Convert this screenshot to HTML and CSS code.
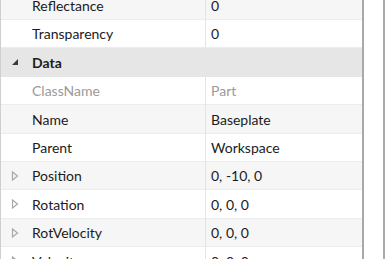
FILE: index.html
```html
<!DOCTYPE html>
<html>
<head>
<meta charset="utf-8">
<link rel="stylesheet" href="styles.css">
</head>
<body>
<div class="panel">
  <div class="viewport">
    <div class="list">
      <div class="row alt h29"><div class="name">Reflectance</div><div class="value">0</div></div>
      <div class="row h28"><div class="name">Transparency</div><div class="value">0</div></div>
      <div class="row header h29"><div class="name"><svg class="arrow" width="8" height="8" viewBox="0 0 8 8"><polygon points="7,1 7,7 1,7" fill="#3a3a3a"/></svg><b>Data</b></div><div class="value"></div></div>
      <div class="row h28 muted"><div class="name">ClassName</div><div class="value">Part</div></div>
      <div class="row alt h29"><div class="name">Name</div><div class="value">Baseplate</div></div>
      <div class="row h28"><div class="name">Parent</div><div class="value">Workspace</div></div>
      <div class="row alt h28"><div class="name"><svg class="arrow" width="8" height="10" viewBox="0 0 8 10"><polygon points="1.5,1 6.5,5 1.5,9" fill="none" stroke="#a8a8a8" stroke-width="1.2"/></svg>Position</div><div class="value">0, -10, 0</div></div>
      <div class="row h29"><div class="name"><svg class="arrow" width="8" height="10" viewBox="0 0 8 10"><polygon points="1.5,1 6.5,5 1.5,9" fill="none" stroke="#a8a8a8" stroke-width="1.2"/></svg>Rotation</div><div class="value">0, 0, 0</div></div>
      <div class="row alt h28"><div class="name"><svg class="arrow" width="8" height="10" viewBox="0 0 8 10"><polygon points="1.5,1 6.5,5 1.5,9" fill="none" stroke="#a8a8a8" stroke-width="1.2"/></svg>RotVelocity</div><div class="value">0, 0, 0</div></div>
      <div class="row h29"><div class="name"><svg class="arrow" width="8" height="10" viewBox="0 0 8 10"><polygon points="1.5,1 6.5,5 1.5,9" fill="none" stroke="#a8a8a8" stroke-width="1.2"/></svg>Velocity</div><div class="value">0, 0, 0</div></div>
    </div>
  </div>
  <div class="scrollbar"></div>
</div>
</body>
</html>
```
FILE: styles.css
```css
html, body {
  margin: 0;
  padding: 0;
  background: #ffffff;
}
body {
  font-family: Lato, "Noto Sans", sans-serif;
  font-size: 14px;
  color: #1b1b1b;
  width: 386px;
  height: 259px;
  overflow: hidden;
}
.panel {
  display: flex;
  height: 259px;
}
.viewport {
  width: 361px;
  height: 259px;
  overflow: hidden;
  border-left: 1px solid #cfcfcf;
}
.list {
  margin-top: -9px;
  display: flex;
  flex-direction: column;
}
.row {
  display: flex;
  align-items: stretch;
  border-bottom: 1px solid #ececec;
  background: #ffffff;
  box-sizing: border-box;
}
.h28 { height: 28px; }
.h29 { height: 29px; }
.row.alt { background: #f6f6f6; }
.row.header { background: #e6e6e6; border-bottom-color: #e6e6e6; }
.name {
  width: 205px;
  box-sizing: border-box;
  padding-left: 31px;
  display: flex;
  align-items: center;
  position: relative;
  border-right: 1px solid #e4e4e4;
}
.header .name { border-right-color: #e6e6e6; }
.value {
  flex: 1;
  padding-left: 5px;
  display: flex;
  align-items: center;
}
.muted { color: #9a9a9a; }
.arrow {
  position: absolute;
  left: 10px;
  top: 50%;
  transform: translateY(-50%);
}
b { font-weight: 700; }
.scrollbar {
  width: 19px;
  border-left: 2px solid #a9a9a9;
  border-right: 2px solid #a9a9a9;
  background: #ffffff;
}
```
